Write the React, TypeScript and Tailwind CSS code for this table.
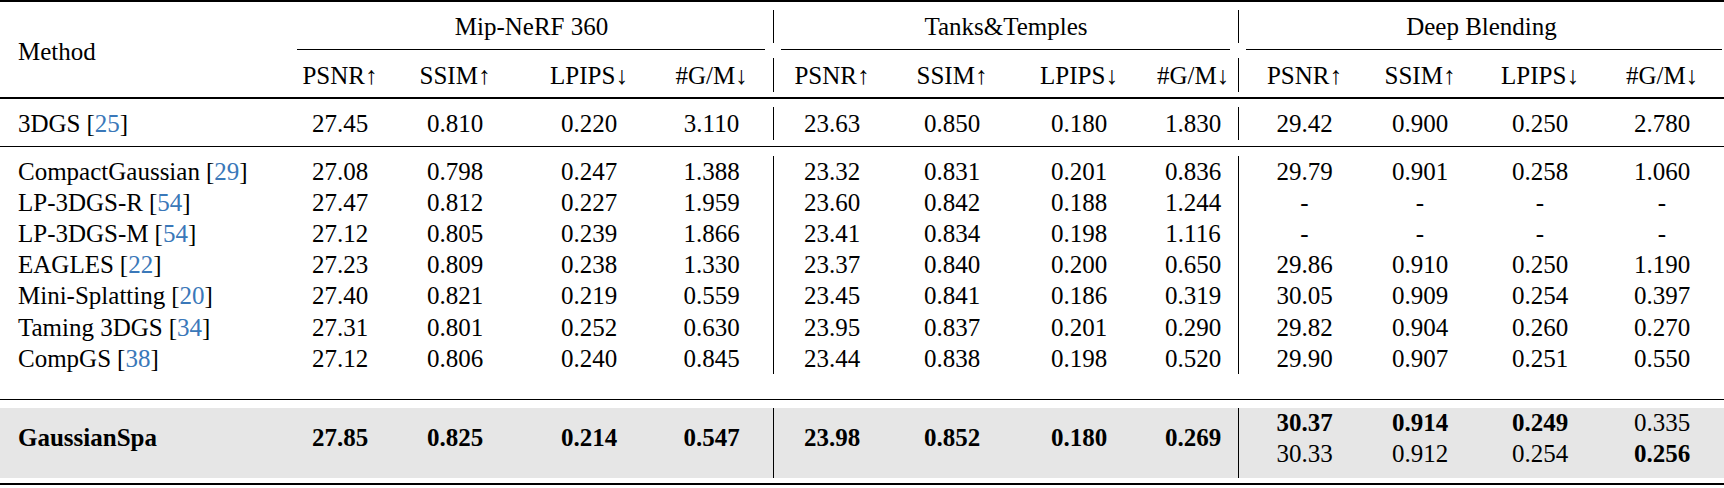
import React from "react";

const COLS =
  "grid grid-cols-[290px_104px_122px_138px_119px_117px_124px_130px_94px_122px_120px_120px_124px]";

// small per-column nudges so each column's text sits where the reference has it
const PAD = ["pr-[4px]", "", "pl-[8px]", "pr-[4px]", "", "", "", "pl-[4px]", "pl-[10px]", "", "", ""];

type Row = { name: string; cite?: string; vals: string[] };

const rows: Row[] = [
  { name: "CompactGaussian", cite: "29", vals: ["27.08", "0.798", "0.247", "1.388", "23.32", "0.831", "0.201", "0.836", "29.79", "0.901", "0.258", "1.060"] },
  { name: "LP-3DGS-R", cite: "54", vals: ["27.47", "0.812", "0.227", "1.959", "23.60", "0.842", "0.188", "1.244", "-", "-", "-", "-"] },
  { name: "LP-3DGS-M", cite: "54", vals: ["27.12", "0.805", "0.239", "1.866", "23.41", "0.834", "0.198", "1.116", "-", "-", "-", "-"] },
  { name: "EAGLES", cite: "22", vals: ["27.23", "0.809", "0.238", "1.330", "23.37", "0.840", "0.200", "0.650", "29.86", "0.910", "0.250", "1.190"] },
  { name: "Mini-Splatting", cite: "20", vals: ["27.40", "0.821", "0.219", "0.559", "23.45", "0.841", "0.186", "0.319", "30.05", "0.909", "0.254", "0.397"] },
  { name: "Taming 3DGS", cite: "34", vals: ["27.31", "0.801", "0.252", "0.630", "23.95", "0.837", "0.201", "0.290", "29.82", "0.904", "0.260", "0.270"] },
  { name: "CompGS", cite: "38", vals: ["27.12", "0.806", "0.240", "0.845", "23.44", "0.838", "0.198", "0.520", "29.90", "0.907", "0.251", "0.550"] },
];

const metrics = ["PSNR↑", "SSIM↑", "LPIPS↓", "#G/M↓"];

function Name({ name, cite }: { name: string; cite?: string }) {
  return (
    <div className="flex items-center pl-[18px] whitespace-nowrap">
      {name}
      {cite && (
        <span className="ml-[6px]">
          [<span className="text-[#3a78b9]">{cite}</span>]
        </span>
      )}
    </div>
  );
}

function Cell({ v, i, bold, extra = "" }: { v: string; i: number; bold?: boolean; extra?: string }) {
  const line = i === 4 || i === 8 ? "border-l border-black" : "";
  return (
    <div
      className={`flex items-center justify-center whitespace-nowrap ${PAD[i]} ${line} ${extra} ${bold ? "font-bold" : ""}`}
    >
      {v}
    </div>
  );
}

export default function App() {
  return (
    <div className="w-[1724px] h-[488px] bg-white text-black font-['Liberation_Serif'] text-[25px] leading-none">
      <div className="h-[2px] bg-black" />
      {/* header */}
      <div className={`${COLS} grid-rows-[33px_15px_34px] mt-[8px]`}>
        <div className="row-span-3 flex items-center pl-[18px]">Method</div>
        <div className="col-span-4 flex items-center justify-center">Mip-NeRF 360</div>
        <div className="col-span-4 flex items-center justify-center border-l border-black">Tanks&amp;Temples</div>
        <div className="col-span-4 flex items-center justify-center border-l border-black">Deep Blending</div>
        <div className="col-span-4 pt-[6px] pl-[7px] pr-[8px]"><div className="h-px bg-black" /></div>
        <div className="col-span-4 pt-[6px] pl-[8px] pr-[8px]"><div className="h-px bg-black" /></div>
        <div className="col-span-4 pt-[6px] pl-[8px] pr-[2px]"><div className="h-px bg-black" /></div>
        {[0, 1, 2].map((g) =>
          metrics.map((m, j) => <Cell key={`${g}-${j}`} v={m} i={g * 4 + j} />)
        )}
      </div>
      <div className="h-[1.5px] bg-black mt-[5px]" />
      {/* baseline */}
      <div className={`${COLS} grid-rows-[33px] mt-[8px]`}>
        <Name name="3DGS" cite="25" />
        {["27.45", "0.810", "0.220", "3.110", "23.63", "0.850", "0.180", "1.830", "29.42", "0.900", "0.250", "2.780"].map((v, i) => (
          <Cell key={i} v={v} i={i} />
        ))}
      </div>
      <div className="h-px bg-black mt-[6px]" />
      {/* body */}
      <div className={`${COLS} auto-rows-[31.2px] mt-[9px]`}>
        {rows.map((r) => (
          <React.Fragment key={r.name}>
            <Name name={r.name} cite={r.cite} />
            {r.vals.map((v, i) => (
              <Cell key={i} v={v} i={i} />
            ))}
          </React.Fragment>
        ))}
      </div>
      <div className="h-px bg-black mt-[25px]" />
      {/* ours */}
      <div className={`${COLS} grid-rows-[70px] mt-[8px] bg-[#e6e6e6]`}>
        <div className="flex items-center pl-[18px] pb-[10px] font-bold">GaussianSpa</div>
        {["27.85", "0.825", "0.214", "0.547", "23.98", "0.852", "0.180", "0.269"].map((v, i) => (
          <Cell key={i} v={v} i={i} bold extra="pb-[10px]" />
        ))}
        {[
          ["30.37", "30.33", true, false],
          ["0.914", "0.912", true, false],
          ["0.249", "0.254", true, false],
          ["0.335", "0.256", false, true],
        ].map(([a, b, ba, bb], j) => (
          <div
            key={j}
            className={`flex flex-col items-center justify-center gap-[6px] pb-[10px] ${PAD[8 + j]} ${j === 0 ? "border-l border-black" : ""}`}
          >
            <span className={ba ? "font-bold" : ""}>{a as string}</span>
            <span className={bb ? "font-bold" : ""}>{b as string}</span>
          </div>
        ))}
      </div>
      <div className="h-[2px] bg-black mt-[5px]" />
    </div>
  );
}
